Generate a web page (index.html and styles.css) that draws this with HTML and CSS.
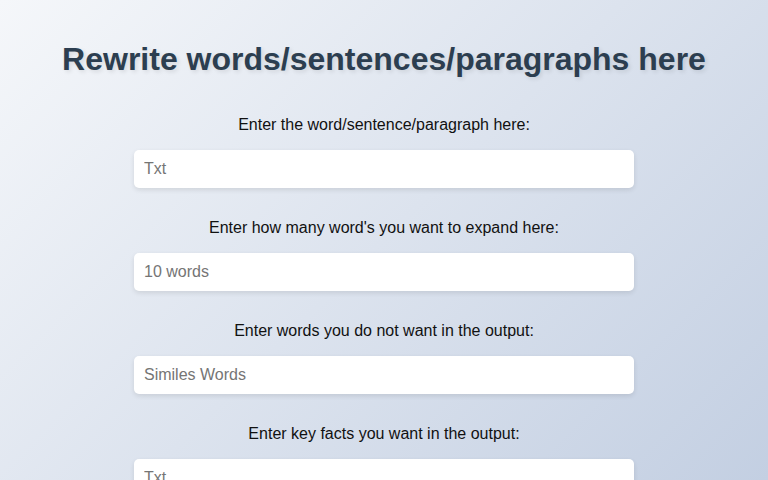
FILE: index.html
```html
<!DOCTYPE html>
<html lang="en">
<head>
    <meta charset="UTF-8">
    <meta name="viewport" content="width=device-width, initial-scale=1.0">
    <title>Rewrite</title>
    <link rel="stylesheet" href="styles.css">
</head>
<body>
    <div class="container">
        <h1>Rewrite words/sentences/paragraphs here</h1>
        <form class="rewrite-form">
            <div class="field">
                <label for="text">Enter the word/sentence/paragraph here:</label>
                <input type="text" id="text" placeholder="Txt">
            </div>
            <div class="field">
                <label for="count">Enter how many word's you want to expand here:</label>
                <input type="text" id="count" placeholder="10 words">
            </div>
            <div class="field">
                <label for="exclude">Enter words you do not want in the output:</label>
                <input type="text" id="exclude" placeholder="Similes Words">
            </div>
            <div class="field">
                <label for="facts">Enter key facts you want in the output:</label>
                <input type="text" id="facts" placeholder="Txt">
            </div>
        </form>
    </div>
</body>
</html>
```

FILE: styles.css
```css
html, body {
    margin: 0;
    min-height: 100%;
}
body {
    font-family: "Liberation Sans", Arial, sans-serif;
    background: linear-gradient(135deg, #f5f7fa 0%, #c3cfe2 100%);
    background-attachment: fixed;
    color: #111;
}
.container {
    padding: 20px;
    text-align: center;
}
h1 {
    color: #2c3e50;
    font-size: 32px;
    margin: 21px 0 38px;
    text-shadow: 2px 2px 4px rgba(0, 0, 0, 0.1);
}
.rewrite-form {
    display: flex;
    flex-direction: column;
    align-items: center;
    gap: 31px;
}
.field {
    display: flex;
    flex-direction: column;
    align-items: center;
    gap: 16px;
}
.field label {
    font-size: 16px;
}
.field input {
    width: 500px;
    box-sizing: border-box;
    height: 38px;
    padding: 0 10px;
    border: none;
    border-radius: 5px;
    background: white;
    font-family: inherit;
    font-size: 16px;
    box-shadow: 0 2px 5px rgba(0, 0, 0, 0.1);
}
.field input::placeholder {
    color: #757575;
}
```
